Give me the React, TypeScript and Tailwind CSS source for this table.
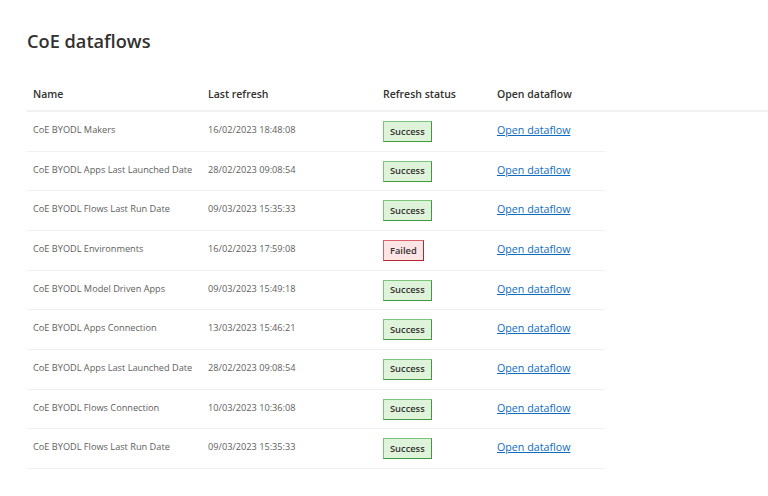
const rows = [
  { name: 'CoE BYODL Makers', date: '16/02/2023 18:48:08', ok: true },
  { name: 'CoE BYODL Apps Last Launched Date', date: '28/02/2023 09:08:54', ok: true },
  { name: 'CoE BYODL Flows Last Run Date', date: '09/03/2023 15:35:33', ok: true },
  { name: 'CoE BYODL Environments', date: '16/02/2023 17:59:08', ok: false },
  { name: 'CoE BYODL Model Driven Apps', date: '09/03/2023 15:49:18', ok: true },
  { name: 'CoE BYODL Apps Connection', date: '13/03/2023 15:46:21', ok: true },
  { name: 'CoE BYODL Apps Last Launched Date', date: '28/02/2023 09:08:54', ok: true },
  { name: 'CoE BYODL Flows Connection', date: '10/03/2023 10:36:08', ok: true },
  { name: 'CoE BYODL Flows Last Run Date', date: '09/03/2023 15:35:33', ok: true },
];

const StatusBadge = ({ ok }: { ok: boolean }) =>
  ok ? (
    <span className="inline-flex h-[21px] items-center border border-[#7cc47c] border-b-[#3f9a3f] border-r-[#3f9a3f] bg-[#dff3db] px-[6px] text-[9.3px] font-semibold text-[#323130]">
      Success
    </span>
  ) : (
    <span className="inline-flex h-[21px] items-center border border-[#d9626a] border-b-[#b3262f] border-r-[#b3262f] bg-[#fde4e5] px-[6px] text-[9.3px] font-semibold text-[#323130]">
      Failed
    </span>
  );

const App = () => {
  return (
    <div
      className="h-[496px] w-[768px] overflow-hidden bg-white pl-[27px] pt-[28px]"
      style={{ fontFamily: '"Segoe UI", "Open Sans", sans-serif' }}
    >
      <h1 className="text-[18.2px] leading-[26px] font-semibold text-[#323130]">CoE dataflows</h1>

      {/* Header */}
      <div className="mt-[23px] flex h-[35px] items-center border-b-2 border-[#f0f0f0] pt-[3px] text-[10.5px] font-semibold text-[#323130]">
        <div className="w-[175px] pl-[6px]">Name</div>
        <div className="w-[175px] pl-[6px]">Last refresh</div>
        <div className="w-[114px] pl-[6px]">Refresh status</div>
        <div className="pl-[6px]">Open dataflow</div>
      </div>

      {/* Rows */}
      <div className="w-[578px]">
        {rows.map((row, i) => (
          <div key={i} className="flex h-[39.67px] border-b border-[#f0f0f0] pt-[9px] text-[9.2px] text-[#605e5c]">
            <div className="w-[175px] pl-[6px] pt-[2px] leading-[13px]">{row.name}</div>
            <div className="w-[175px] pl-[6px] pt-[2px] leading-[13px]">{row.date}</div>
            <div className="w-[114px] pl-[6px]">
              <StatusBadge ok={row.ok} />
            </div>
            <div className="pl-[6px] pt-[2px]">
              <a href="#" className="text-[10.7px] leading-[15px] text-[#0f6cbd] underline underline-offset-1">
                Open dataflow
              </a>
            </div>
          </div>
        ))}
      </div>
    </div>
  );
};

export default App;
